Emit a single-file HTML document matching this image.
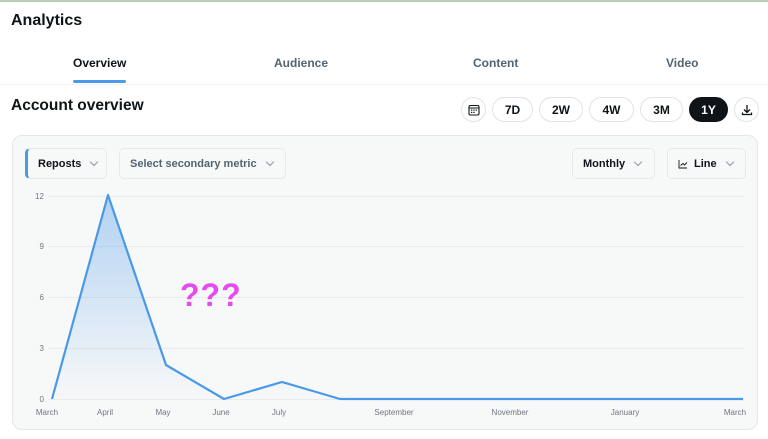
<!DOCTYPE html>
<html><head><meta charset="utf-8"><style>
*{margin:0;padding:0;box-sizing:border-box}
body{width:768px;height:439px;overflow:hidden;background:#fff;font-family:"Liberation Sans",sans-serif;color:#0f1419;position:relative}
.a{position:absolute}
.btn{position:absolute;top:97px;height:25px;border:1px solid #dfe3e6;border-radius:13px;font-size:12px;font-weight:bold;display:flex;align-items:center;justify-content:center;background:#fff}
.dd{position:absolute;top:148px;height:31px;border:1px solid #e6e9eb;border-radius:5px;background:#f7f8f8;font-size:11px;font-weight:bold;display:flex;align-items:center;padding-left:10px}
.chev{display:inline-block;width:6px;height:6px;border-right:1px solid #8b98a5;border-bottom:1px solid #8b98a5;transform:rotate(45deg);margin-left:10px;margin-top:-4px}
.tab{position:absolute;top:56px;font-size:12px;color:#536471;font-weight:bold}
.xl{position:absolute;top:408px;font-size:8px;color:#6e7780;transform:translateX(-50%)}
.yl{position:absolute;left:34px;font-size:8px;color:#6e7780;width:10px;text-align:right}
</style></head><body>
<div class="a" style="left:0;top:0;width:768px;height:2px;background:#b9cdb7"></div>
<div class="a" style="left:11px;top:12px;font-size:16px;font-weight:bold">Analytics</div>
<div class="tab" style="left:73px;color:#0f1419">Overview</div>
<div class="a" style="left:73px;top:80px;width:53px;height:3px;border-radius:2px;background:#4a99e9"></div>
<div class="tab" style="left:274px">Audience</div>
<div class="tab" style="left:473px">Content</div>
<div class="tab" style="left:666px">Video</div>
<div class="a" style="left:0;top:84px;width:768px;height:1px;background:#eff3f4"></div>
<div class="a" style="left:11px;top:97px;font-size:15.5px;font-weight:bold">Account overview</div>
<div class="btn" style="left:461px;width:25px"><svg width="12" height="12" viewBox="0 0 12 12"><rect x="1" y="1.5" width="10" height="9.5" rx="1.5" fill="none" stroke="#0f1419" stroke-width="1.1"/><line x1="1" y1="4" x2="11" y2="4" stroke="#0f1419"/><g fill="#0f1419"><rect x="3" y="5.5" width="1.3" height="1.2"/><rect x="5.3" y="5.5" width="1.3" height="1.2"/><rect x="7.6" y="5.5" width="1.3" height="1.2"/><rect x="3" y="7.8" width="1.3" height="1.2"/><rect x="5.3" y="7.8" width="1.3" height="1.2"/></g></svg></div>
<div class="btn" style="left:492px;width:41px">7D</div>
<div class="btn" style="left:539px;width:44px">2W</div>
<div class="btn" style="left:589px;width:45px">4W</div>
<div class="btn" style="left:640px;width:43px">3M</div>
<div class="btn" style="left:689px;width:39px;background:#0f1419;color:#fff;border-color:#0f1419">1Y</div>
<div class="btn" style="left:734px;width:25px"><svg width="12" height="12" viewBox="0 0 12 12" fill="none" stroke="#0f1419" stroke-width="1.3"><path d="M6 1v7M3 5.5l3 3 3-3M1.5 8.5v2h9v-2"/></svg></div>
<div class="a" style="left:12px;top:135px;width:746px;height:295px;background:#f7f8f8;border:1px solid #e3e7ea;border-radius:10px"></div>
<div class="dd" style="left:25px;width:82px;border-left:3px solid #4a99e9">Reposts<span class="chev"></span></div>
<div class="dd" style="left:119px;width:167px;color:#536471">Select secondary metric<span class="chev"></span></div>
<div class="dd" style="left:572px;width:83px">Monthly<span class="chev"></span></div>
<div class="dd" style="left:667px;width:79px"><svg width="10" height="10" viewBox="0 0 10 10" fill="none" stroke="#0f1419" stroke-width="0.9" style="margin-right:6px"><path d="M1 1v8h8M2.5 6.5l2.5-2 1.5 1.5 2.5-2.5"/></svg>Line<span class="chev"></span></div>
<svg class="a" style="left:0;top:0" width="768" height="439">
<defs><linearGradient id="g" x1="0" y1="0" x2="0" y2="1"><stop offset="0" stop-color="#4a99e9" stop-opacity="0.4"/><stop offset="1" stop-color="#4a99e9" stop-opacity="0"/></linearGradient></defs>
<g stroke="#e8ebed" stroke-width="1"><line x1="48" y1="196.5" x2="744" y2="196.5"/><line x1="48" y1="246.5" x2="744" y2="246.5"/><line x1="48" y1="297.5" x2="744" y2="297.5"/><line x1="48" y1="348.5" x2="744" y2="348.5"/><line x1="48" y1="399.5" x2="744" y2="399.5"/></g>
<path d="M52 399L108 195L166 365L224 399L282 382L340 399L743 399Z" fill="url(#g)"/>
<path d="M52 399L108 195L166 365L224 399L282 382L340 399L743 399" fill="none" stroke="#4a99e9" stroke-width="2.2" stroke-linejoin="round"/>
<text x="180" y="306" font-family="Liberation Sans" font-weight="bold" font-size="32" fill="#e64bf0" letter-spacing="1">???</text>
</svg>
<div class="yl" style="top:192px">12</div><div class="yl" style="top:242px">9</div><div class="yl" style="top:293px">6</div><div class="yl" style="top:344px">3</div><div class="yl" style="top:395px">0</div>
<div class="xl" style="left:47px">March</div><div class="xl" style="left:105px">April</div><div class="xl" style="left:163px">May</div><div class="xl" style="left:221px">June</div><div class="xl" style="left:279px">July</div><div class="xl" style="left:394px">September</div><div class="xl" style="left:510px">November</div><div class="xl" style="left:625px">January</div><div class="xl" style="left:735px">March</div>
</body></html>
